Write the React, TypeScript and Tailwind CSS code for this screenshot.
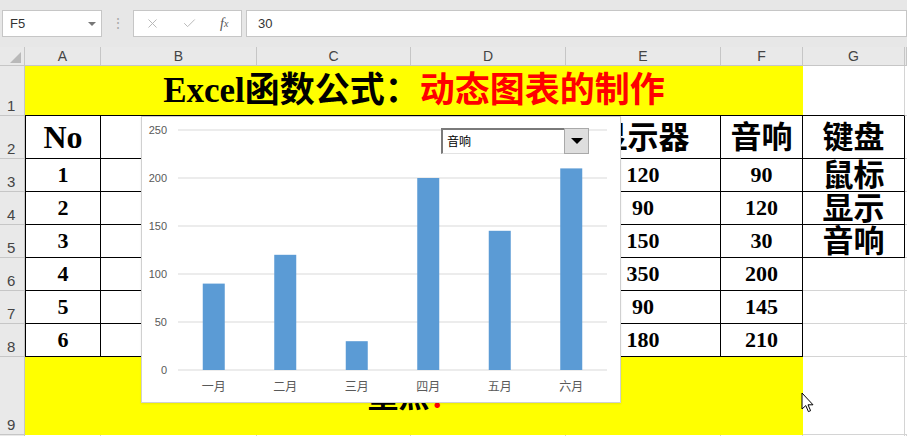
import { X, Check } from 'lucide-react';

const cols = ['A', 'B', 'C', 'D', 'E', 'F', 'G', ''];

const rows = [
  { no: 1, e: 120, f: 90, g: '鼠标' },
  { no: 2, e: 90, f: 120, g: '显示' },
  { no: 3, e: 150, f: 30, g: '音响' },
  { no: 4, e: 350, f: 200, g: '' },
  { no: 5, e: 90, f: 145, g: '' },
  { no: 6, e: 180, f: 210, g: '' },
];

const months = ['一月', '二月', '三月', '四月', '五月', '六月'];
const values = [90, 120, 30, 200, 145, 210];

const rowHead =
  'bg-[#e9e9e9] border-r border-b border-[#c6c6c6] text-[#444] text-[15px] leading-none flex items-end pl-[7px] pb-[2px]';
const gray = 'border-r border-b border-[#d4d4d4]';
const black = 'border-r border-b border-black flex items-center justify-center';
const numText = 'font-bold text-[22px] leading-none';
const cjkText = 'font-bold text-[31px] leading-none whitespace-nowrap';

function FormulaBar() {
  return (
    <div className="flex items-center h-[47px] bg-[#e7e7e7] pl-[2px] font-['Liberation_Sans','Noto_Sans_CJK_SC',sans-serif] text-[13px] text-[#333]">
      <div className="w-[100px] h-[27px] bg-white border border-[#c6c6c6] flex items-center justify-between pl-[7px] pr-[5px]">
        <span>F5</span>
        <span className="w-0 h-0 border-l-[4px] border-r-[4px] border-t-[4px] border-l-transparent border-r-transparent border-t-[#777]" />
      </div>
      <div className="w-[31px] flex justify-center text-[#aaa] text-[14px]">⋮</div>
      <div className="w-[109px] h-[27px] bg-white border border-[#c6c6c6] flex items-center">
        <div className="w-[38px] flex justify-center">
          <X size={15} strokeWidth={1.5} color="#b4b4b4" />
        </div>
        <div className="w-[36px] flex justify-center">
          <Check size={15} strokeWidth={1.5} color="#b4b4b4" />
        </div>
        <div className="w-[34px] flex justify-center font-['Liberation_Serif',serif] italic text-[#555] text-[14px]">
          f<span className="text-[10px] mt-[3px]">x</span>
        </div>
      </div>
      <div className="ml-[4px] flex-1 h-[27px] bg-white border border-[#c6c6c6] flex items-center pl-[11px]">30</div>
    </div>
  );
}

function Chart() {
  const x0 = 36;
  const slot = 71.5;
  const base = 253;
  return (
    <div className="absolute left-[141px] top-[116px] w-[480px] h-[287px] bg-white border border-[#d0d0d0] shadow-[0_1px_2px_rgba(0,0,0,0.08)]">
      <svg width="478" height="285" className="font-['Liberation_Sans','Noto_Sans_CJK_SC',sans-serif]">
        {[0, 50, 100, 150, 200, 250].map((v) => {
          const y = base - v * 0.96;
          return (
            <g key={v}>
              <line x1={x0} x2={465} y1={y} y2={y} stroke="#d9d9d9" strokeWidth="1" />
              <text x={25} y={y + 4} textAnchor="end" fontSize="11" fill="#595959">
                {v}
              </text>
            </g>
          );
        })}
        {values.map((v, i) => {
          const cx = x0 + slot * (i + 0.5);
          const h = v * 0.96;
          return (
            <g key={i}>
              <rect x={cx - 11} y={base - h} width="22" height={h} fill="#5b9bd5" />
              <text x={cx} y={274} textAnchor="middle" fontSize="12" fill="#595959">
                {months[i]}
              </text>
            </g>
          );
        })}
      </svg>
      <div className="absolute left-[299px] top-[11px] w-[148px] h-[26px] flex font-['Liberation_Sans','Noto_Sans_CJK_SC',sans-serif]">
        <div className="flex-1 bg-white border-t-2 border-l-2 border-t-[#7a7a7a] border-l-[#7a7a7a] border-b border-b-[#e3e3e3] flex items-center pl-[4px] text-[12px] text-black">
          音响
        </div>
        <div className="w-[25px] bg-[#dedede] border border-[#a9a9a9] flex items-center justify-center">
          <span className="w-0 h-0 border-l-[6px] border-r-[6px] border-t-[6px] border-l-transparent border-r-transparent border-t-black" />
        </div>
      </div>
    </div>
  );
}

function Cursor() {
  return (
    <svg className="absolute left-[801px] top-[392px]" width="14" height="22" viewBox="0 0 14 22">
      <path d="M1 1 L1 17 L4.8 13.6 L7.4 19.6 L9.6 18.7 L7 12.8 L12 12.8 Z" fill="white" stroke="black" strokeWidth="1" strokeLinejoin="round" />
    </svg>
  );
}

export default function App() {
  return (
    <div className="relative w-[907px] h-[436px] overflow-hidden bg-white">
      <FormulaBar />
      <div className="grid grid-cols-[25px_76px_156px_154px_155px_155px_82px_102px_1fr] grid-rows-[19px_50px_43px_repeat(6,33px)_78px_1fr] h-[389px] font-['Liberation_Serif','Noto_Sans_CJK_SC',serif] text-black">
        {/* column headers */}
        <div className="bg-[#e9e9e9] border-r border-b border-[#c6c6c6] relative">
          <span className="absolute right-[3px] bottom-[2px] w-0 h-0 border-l-[11px] border-t-[11px] border-l-transparent border-t-transparent border-r-0 border-b-0 [border-bottom:11px_solid_#b9b9b9]" />
        </div>
        {cols.map((c, i) => (
          <div
            key={i}
            className="bg-[#e9e9e9] border-r border-b border-[#c6c6c6] flex items-center justify-center text-[14px] text-[#444] font-['Liberation_Sans',sans-serif]"
          >
            {c}
          </div>
        ))}

        {/* row 1 */}
        <div className={rowHead + " font-['Liberation_Sans',sans-serif]"}>1</div>
        <div className="col-span-6 bg-[#ffff00] border-b border-black flex items-center justify-center font-bold text-[35px] leading-none whitespace-nowrap">
          <span>Excel函数公式：</span>
          <span className="text-[#ff0000]">动态图表的制作</span>
        </div>
        <div className="border-r border-b border-r-[#d4d4d4] border-b-black" />
        <div className="border-b border-[#d4d4d4]" />

        {/* row 2 */}
        <div className={rowHead + " font-['Liberation_Sans',sans-serif]"}>2</div>
        <div className={black + ' border-l'}>
          <span className="font-bold text-[32px] leading-none">No</span>
        </div>
        <div className={black} />
        <div className={black} />
        <div className={black} />
        <div className={black}>
          <span className={cjkText}>显示器</span>
        </div>
        <div className={black}>
          <span className={cjkText}>音响</span>
        </div>
        <div className={black}>
          <span className={cjkText}>键盘</span>
        </div>
        <div className="border-b border-[#d4d4d4]" />

        {/* rows 3-8 */}
        {rows.map((r) => (
          <div key={r.no} className="contents">
            <div className={rowHead + " font-['Liberation_Sans',sans-serif]"}>{r.no + 2}</div>
            <div className={black + ' border-l'}>
              <span className={numText}>{r.no}</span>
            </div>
            <div className={black} />
            <div className={black} />
            <div className={black} />
            <div className={black}>
              <span className={numText}>{r.e}</span>
            </div>
            <div className={black}>
              <span className={numText}>{r.f}</span>
            </div>
            {r.g ? (
              <div className={black + ' overflow-visible'}>
                <span className={cjkText}>{r.g}</span>
              </div>
            ) : (
              <div className={gray} />
            )}
            <div className="border-b border-[#d4d4d4]" />
          </div>
        ))}

        {/* row 9 */}
        <div className={rowHead + " font-['Liberation_Sans',sans-serif]"}>9</div>
        <div className="col-span-6 bg-[#ffff00] flex items-center justify-center font-bold text-[31px] leading-none">
          <span>重点</span>
          <span className="text-[#ff0000]">！</span>
        </div>
        <div className={gray} />
        <div className="border-b border-[#d4d4d4]" />

        {/* row 10 (cut off) */}
        <div className="bg-[#e9e9e9] border-r border-[#c6c6c6]" />
        {cols.map((c, i) => (
          <div key={'r10' + i} className="border-r border-[#d4d4d4]" />
        ))}
      </div>
      <Chart />
      <Cursor />
    </div>
  );
}
